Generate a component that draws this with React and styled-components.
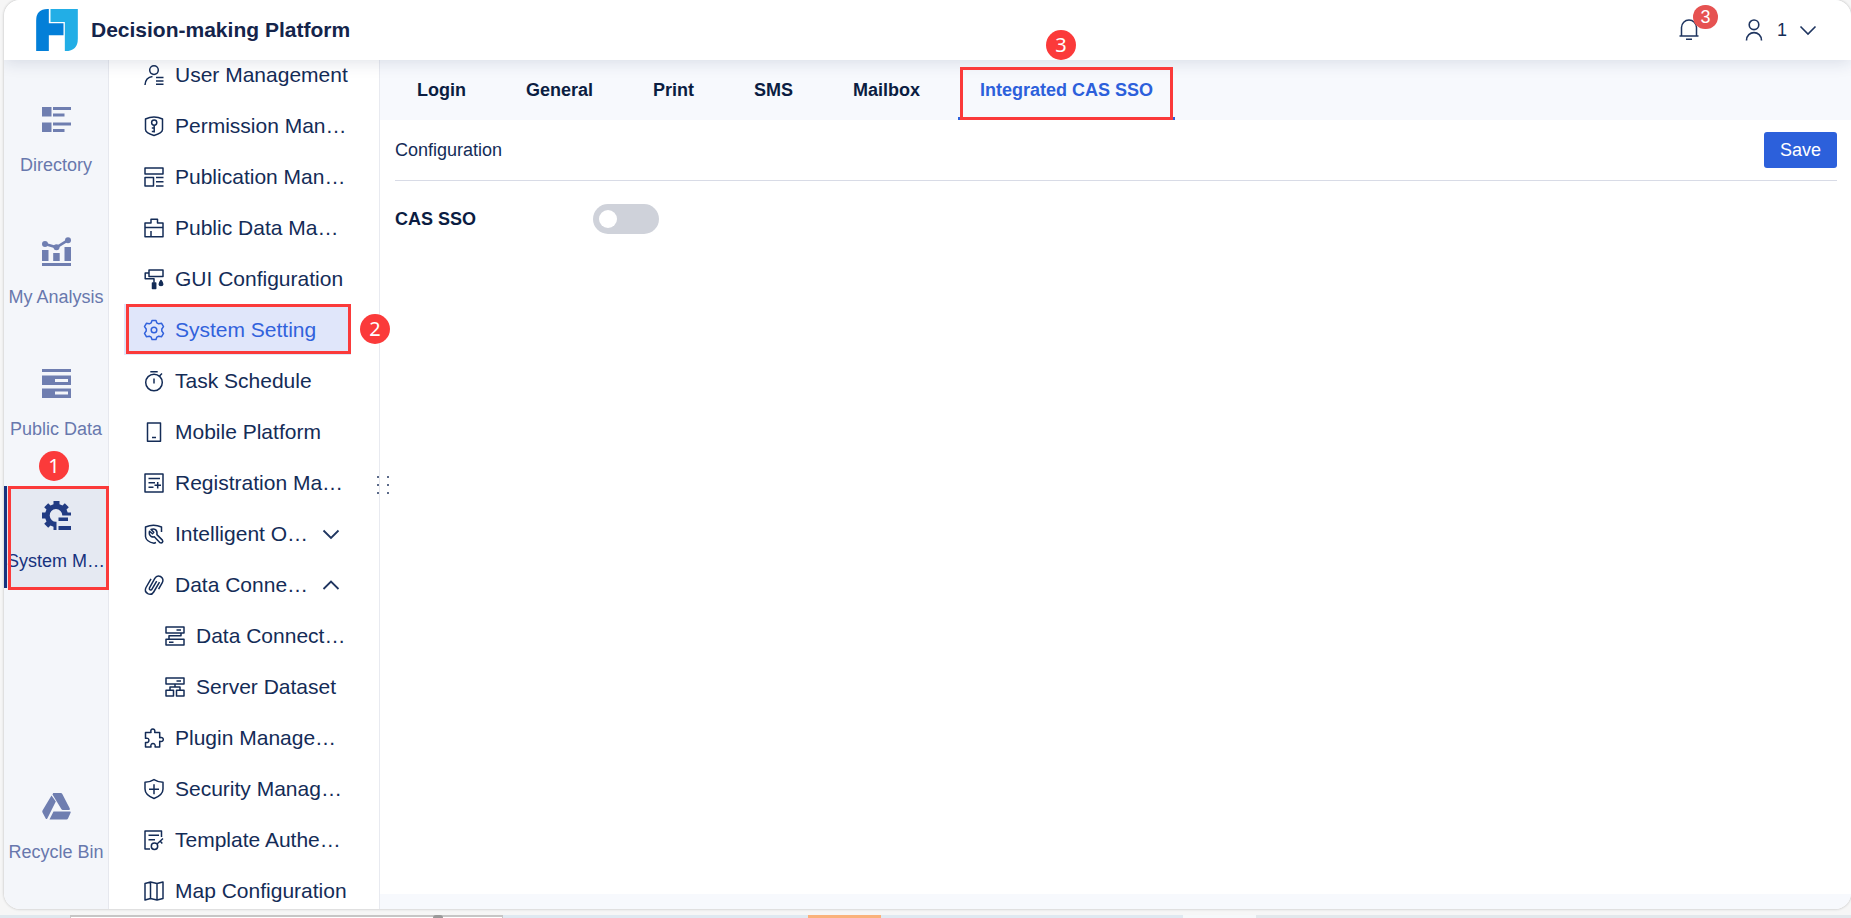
import { useState } from "react";
import styled, { createGlobalStyle } from "styled-components";

// Icons of the left rail (29px grid)
const railIcons = {
    directory: (
        <path d="M0 2h9.5v9.5H0zM11 2h18v3H11zM11 8.5h11.500v3H11zM0 17.5h9.5V27H0zM11 17.5h18v3H11zM11 24h11.500v3H11z" />
    ),
    analysis: (
        <>
            <path d="M0 13h6.500v11H0zM11.200 16h6.500v8h-6.500zM22.500 10H29v14h-6.500zM0 26h29v3H0z" />
            <path d="M3 7l11.500 3.300L26 3.200" fill="none" stroke="currentColor" strokeWidth="2.6" />
            <circle cx="3" cy="7" r="3" />
            <circle cx="14.5" cy="10.3" r="3" />
            <circle cx="26" cy="3.2" r="3" />
        </>
    ),
    data: (
        <path fillRule="evenodd" d="M0 0h29v3H0zM0 6.500h29V16H0zM13 10v3h13v-3zM0 19.500h29V29H0zM13 22.500v3h13v-3z" />
    ),
    system: (
        <>
            <path d="M11.500 0h6v3.200l3 1.300L22.800 2.200l4 4L24.500 8.500l1.200 3H29v3H20.300A6.300 6.300 0 1 0 14.500 20.700V29h-3v-3.300l-3-1.200-2.300 2.300-4-4 2.300-2.300-1.200-3H0v-6h3.300l1.200-3-2.300-2.300 4-4L8.500 4.500l3-1.300z" />
            <path d="M16.500 16.500H26V20h-9.500zM16.500 25H29v4H16.500z" />
        </>
    ),
    recycle: (
        <path d="M11.200 1h7.600q1 0 1.500 1l7.500 14.500q.5 1.500-1 1.500h-6q-1 0-1.500-1L10.500 2.500zM9.500 3.500l4.300 6-8.500 17q-1 1-1.600 0L.5 20.500q-.5-1 0-2zM11.500 19.500H28q1 0 .7 1l-2.700 6q-.5 1-1.500 1H7.500z" />
    ),
};

// Icons of the menu (20px grid, outlined)
const menuIcons = {
    user: <path d="M10 .8a4.300 4.300 0 1 1 0 8.600a4.300 4.300 0 1 1 0-8.600zM1 20c.3-5 3-8 7.500-8.500M12 12.500h7.500M12 16h7.500M12 19.300h7.500" />,
    permission: (
        <>
            <path d="M1.500 3Q10-1 18.500 3v10.500Q18.500 17 10 19.500 1.500 17 1.500 13.500z" />
            <circle cx="10.2" cy="6.600" r="2.600" />
            <path d="M10.200 9.200v7.300M10 12H7.800M10 15.500H7.800" />
        </>
    ),
    publication: <path d="M1 1h18v6H1zM1 10.500h8.500V19H1zM12 10.500h7.500M12 14.800h7.500M12 19h7.500" />,
    publicData: <path d="M1 5h6V1.200h6.500V5H19v13.800H1zM1 9.500h18M7 13v5.800" />,
    gui: (
        <>
            <path d="M5 1h14v6.500H5zM5 4H1.200v5.800H10v4" />
            <path d="M8.500 14h3.200v5.500H8.500zM17 11.500q3.500 5 0 5t0-5z" fill="currentColor" />
        </>
    ),
    setting: (
        <>
            <path d="M8 .5h4l.8 2.300 1.900 1 2.900-.5 1.900 3.300-1.700 2.400v2l1.700 2.400-1.900 3.300-2.900-.5-1.900 1-.8 2.300H8l-.8-2.300-1.900-1-2.900.5L.5 13.400 2.200 11V9L.5 6.600l1.900-3.300 2.900.5 1.900-1z" />
            <circle cx="10" cy="10" r="2.800" />
        </>
    ),
    task: (
        <>
            <circle cx="10" cy="11.500" r="8.300" />
            <path d="M6.300 .8h7.400M10 7.500v5M15.500 5L18 2.500" />
        </>
    ),
    mobile: <path d="M3.500 1h13v18.300h-13zM8 15.500h4" />,
    registration: <path d="M1 1h18v18H1zM4.500 5.500h11.500M4.500 9.700H11M4.500 14.200H9.500M10.500 12.200H17M13.700 9v6.500" />,
    intelligent: (
        <>
            <path d="M17.500 8V3Q9.500-.5 1.500 3v9.500Q2 17.500 10 19.300l2-.8" />
            <path d="M7 5.500l2.800 2.800-1.300 1.500L5.500 7.200Q4.600 11 7.300 12.500q1.600.8 3 .3l5.700 5.900q1.400.7 2.400-.3.900-1.100 0-2.300l-5.500-5.500Q13.500 7.200 11.500 5.600 9.400 4.300 7 5.500z" />
        </>
    ),
    clip: (
        <path d="M12.700 6.200L8 14.200c-1 1.700-3.400.4-2.500-1.400l5.300-9.400C12.300.8 14.500.5 16.500 1.500c2.600 1.400 3 4 1.800 6.200l-3.700 6.500M15.500 7.200L9.700 17c-1.200 2-3.600 2.800-5.900 1.600C1.300 17.200 .8 14.800 2 12.500L7 3.800" />
    ),
    connect: <path d="M1 1h18v6H1zM11.500 4h4.500M16 7v2.800H4V13.300M1 13.300h18V19H1zM4 16.200h4.500" />,
    dataset: <path d="M1 1h18v6H1zM11.500 4h4.500M10 7v3M5 13.300V10h10v3.300M1 13.300h7.500V19H1zM11.500 13.300H19V19h-7.500z" />,
    plugin: (
        <path d="M1.500 4.500H7C6.300 1.800 7.600 1 8.800 1s2.600.8 1.900 3.500h5v5.300c2.700-.7 3.600.5 3.600 1.700s-.9 2.400-3.600 1.700V19h-4.600c.6-2.500-.8-3.400-2.100-3.400S6.300 16.500 7 19H1.500v-4.600c2.500.5 3.400-.6 3.400-2.100S4 9.700 1.500 10.300z" />
    ),
    security: <path d="M10 .6Q14.500 3.300 19 3.300V10q0 6-9 9.500Q1 16 1 10V3.300q4.500 0 9-2.700zM10 5.200v10M5 10.200h10" />,
    template: (
        <>
            <path d="M17.500 7V1H1v18h5M4.500 5.300H15M4.500 9.800h6.500" />
            <circle cx="10.500" cy="16.300" r="3.200" />
            <path d="M13 14l6-5.500M16.500 11.500l1.800 2" />
        </>
    ),
    map: <path d="M1 2.500L6.500 1 13 2.500 19 1v16.500L13 19l-6.500-1.500L1 19zM6.500 1v16.500M13 2.500V19" />,
};

const railItems = [
    { id: "directory", label: "Directory" },
    { id: "analysis", label: "My Analysis" },
    { id: "data", label: "Public Data" },
    { id: "system", label: "System M…", step: 1 },
];

const menuItems = [
    { icon: "user", label: "User Management" },
    { icon: "permission", label: "Permission Man…" },
    { icon: "publication", label: "Publication Man…" },
    { icon: "publicData", label: "Public Data Ma…" },
    { icon: "gui", label: "GUI Configuration" },
    { icon: "setting", label: "System Setting", step: 2 },
    { icon: "task", label: "Task Schedule" },
    { icon: "mobile", label: "Mobile Platform" },
    { icon: "registration", label: "Registration Ma…" },
    { icon: "intelligent", label: "Intelligent O…", arrow: "down" },
    { icon: "clip", label: "Data Conne…", arrow: "up" },
    { icon: "connect", label: "Data Connect…", nested: true },
    { icon: "dataset", label: "Server Dataset", nested: true },
    { icon: "plugin", label: "Plugin Manage…" },
    { icon: "security", label: "Security Manag…" },
    { icon: "template", label: "Template Authe…" },
    { icon: "map", label: "Map Configuration" },
];

const tabs = ["Login", "General", "Print", "SMS", "Mailbox", "Integrated CAS SSO"];

function Chevron({ up }) {
    return (
        <ChevronSvg viewBox="0 0 18 18" aria-hidden="true">
            <path d={up ? "M1.500 13L9 5.500 16.500 13" : "M1.500 5.500L9 13l7.500-7.500"} />
        </ChevronSvg>
    );
}

function RailItem({ item }) {
    return (
        <RailLink href={`#${item.id}`} $active={Boolean(item.step)}>
            <RailSvg viewBox="0 0 29 29" aria-hidden="true">{railIcons[item.id]}</RailSvg>
            <span>{item.label}</span>
            {item.step && (
                <RailMark>
                    <RailStep>{item.step}</RailStep>
                </RailMark>
            )}
        </RailLink>
    );
}

export default function App() {
    const [tab, setTab] = useState("Integrated CAS SSO");
    const [enabled, setEnabled] = useState(false);

    return (
        <Page>
            <GlobalStyle />
            <Window>
                <Header>
                    <Logo viewBox="108 29 125 126" aria-hidden="true">
                        <path fill="#037fd8" d="M108 64Q108 29 142 29H146V72H190V108H146V155H108Z" />
                        <path fill="#22aee6" d="M151 29H233V118Q233 155 196 155H194V68H151Z" />
                    </Logo>
                    <Title>Decision-making Platform</Title>
                    <Bell type="button" aria-label="Notifications">
                        <svg width="20" height="22" viewBox="0 0 20 22" aria-hidden="true">
                            <path d="M2.500 17V8.500a7.500 7.500 0 0 1 15 0V17M.5 17h19M7 20.300h6" />
                        </svg>
                        <Count>3</Count>
                    </Bell>
                    <Account type="button">
                        <svg width="18" height="22" viewBox="0 0 18 22" aria-hidden="true">
                            <circle cx="9" cy="5.800" r="4.800" />
                            <path d="M1.500 21.500c0-10.500 15-10.500 15 0" />
                        </svg>
                        <span>1</span>
                        <Chevron />
                    </Account>
                </Header>

                <Body>
                    <Rail>
                        {railItems.map((item) => (
                            <RailItem key={item.id} item={item} />
                        ))}
                        <Spacer />
                        <RailItem item={{ id: "recycle", label: "Recycle Bin" }} />
                    </Rail>

                    <Menu>
                        <MenuList>
                            {menuItems.map((item) => (
                                <MenuButton
                                    type="button"
                                    key={item.label}
                                    $active={Boolean(item.step)}
                                    $nested={item.nested}
                                >
                                    <MenuSvg viewBox="0 0 20 20" aria-hidden="true">{menuIcons[item.icon]}</MenuSvg>
                                    <MenuLabel>{item.label}</MenuLabel>
                                    {item.arrow && <Chevron up={item.arrow === "up"} />}
                                    {item.step && (
                                        <MenuMark>
                                            <MenuStep>{item.step}</MenuStep>
                                        </MenuMark>
                                    )}
                                </MenuButton>
                            ))}
                        </MenuList>
                    </Menu>

                    <Content>
                        <Grip viewBox="0 0 12 18" aria-hidden="true">
                            <path d="M0 0h2v2H0zM10 0h2v2h-2zM0 8h2v2H0zM10 8h2v2h-2zM0 16h2v2H0zM10 16h2v2h-2z" />
                        </Grip>
                        <Tabs role="tablist">
                            {tabs.map((name) => (
                                <Tab
                                    type="button"
                                    role="tab"
                                    key={name}
                                    aria-selected={tab === name}
                                    $active={tab === name}
                                    onClick={() => setTab(name)}
                                >
                                    {name}
                                    {name === "Integrated CAS SSO" && (
                                        <TabMark>
                                            <TabStep>3</TabStep>
                                        </TabMark>
                                    )}
                                </Tab>
                            ))}
                        </Tabs>
                        <Panel>
                            <PanelHeader>
                                <PanelTitle>Configuration</PanelTitle>
                                <SaveButton type="button">Save</SaveButton>
                            </PanelHeader>
                            <Field>
                                <FieldLabel htmlFor="cas-sso">CAS SSO</FieldLabel>
                                <Switch
                                    id="cas-sso"
                                    type="checkbox"
                                    checked={enabled}
                                    onChange={(e) => setEnabled(e.target.checked)}
                                />
                            </Field>
                        </Panel>
                    </Content>
                </Body>
            </Window>
            <Backdrop>
                <Slice $grow={70} $color="#dfe8ee" />
                <Box>
                    <Knob />
                </Box>
                <Slice $grow={305} $color="#dfe9f1" />
                <Slice $grow={73} $color="#fab27b" />
                <Slice $grow={302} $color="#dfe9f1" />
                <Slice $grow={73} $color="#f5f8fa" />
                <Slice $grow={596} $color="#e2e8ec" />
            </Backdrop>
        </Page>
    );
}

const GlobalStyle = createGlobalStyle`
    * {
        box-sizing: border-box;
    }

    body {
        margin: 0;
        background: #f6f6f6;
        color: #142c57;
        font-family: "Liberation Sans", Arial, sans-serif;
        font-size: 18px;
    }

    button {
        border: none;
        background: none;
        padding: 0;
        color: inherit;
        font: inherit;
        cursor: pointer;
    }
`;

const Page = styled.div`
    height: 100vh;
    display: flex;
    flex-direction: column;
    overflow: hidden;
`;

const Window = styled.div`
    flex: 1;
    min-height: 0;
    margin-left: 4px;
    margin-bottom: 6px;
    display: flex;
    flex-direction: column;
    overflow: hidden;
    border-radius: 16px;
    background: white;
    box-shadow: 0 0 2px 1px #d8d8d8;
`;

const Header = styled.header`
    position: relative;
    z-index: 1;
    flex: none;
    height: 60px;
    padding: 0 34px 0 32px;
    display: flex;
    align-items: center;
    background: white;
    box-shadow: 0 2px 16px rgba(20, 44, 87, 0.14);
`;

const Logo = styled.svg`
    width: 42px;
    height: 42px;
`;

const Title = styled.h1`
    margin: 0 auto 0 13px;
    color: #14244b;
    font-size: 21px;
    line-height: 24px;
`;

const Bell = styled.button`
    position: relative;
    display: flex;
    margin-right: 46px;

    svg {
        fill: none;
        stroke: #1f3560;
        stroke-width: 1.5;
    }
`;

const Count = styled.span`
    position: absolute;
    left: 14px;
    top: -14px;
    width: 25px;
    height: 24px;
    border-radius: 12px;
    background: #e65251;
    color: white;
    line-height: 24px;
    text-align: center;
`;

const Account = styled.button`
    display: flex;
    align-items: center;

    span {
        margin: 0 12px 0 14px;
    }

    svg {
        fill: none;
        stroke: #1f3560;
        stroke-width: 1.6;
    }
`;

const ChevronSvg = styled.svg`
    flex: none;
    width: 18px;
    height: 18px;
    fill: none;
    stroke: #1f3560;
    stroke-width: 1.8;
`;

const Body = styled.div`
    flex: 1;
    min-height: 0;
    display: flex;
`;

const Rail = styled.nav`
    flex: none;
    width: 105px;
    padding: 30px 0;
    display: flex;
    flex-direction: column;
    gap: 30px;
    border-right: 1px solid #e6e8ee;
    background: #f4f6fa;
`;

const RailLink = styled.a`
    position: relative;
    height: 102px;
    padding-top: 15px;
    display: flex;
    flex-direction: column;
    align-items: center;
    gap: 21px;
    background: ${({ $active }) => ($active ? "#e5e9f2" : "transparent")};
    box-shadow: ${({ $active }) => ($active ? "inset 3px 0 #17327e" : "none")};
    color: ${({ $active }) => ($active ? "#17327e" : "#6878ad")};
    line-height: 20px;
    text-decoration: none;
    white-space: nowrap;
`;

const RailSvg = styled.svg`
    flex: none;
    width: 29px;
    height: 29px;
    fill: currentColor;
    opacity: 0.95;
`;

const Spacer = styled.div`
    flex: 1;
    margin-bottom: -30px;
`;

// Red frames and numbered circles drawn over the steps
const Mark = styled.span`
    position: absolute;
    z-index: 2;
    border: 3px solid #fb3a3a;
    pointer-events: none;
`;

const Step = styled.span`
    position: absolute;
    width: 30px;
    height: 30px;
    border-radius: 50%;
    background: #fb3a3a;
    color: white;
    font-family: "Noto Sans", sans-serif;
    font-size: 20px;
    font-weight: 400;
    line-height: 30px;
    text-align: center;
`;

const RailMark = styled(Mark)`
    inset: 0 -1px -2px 4px;
`;

const RailStep = styled(Step)`
    left: 28px;
    top: -38px;
`;

const MenuMark = styled(Mark)`
    inset: 0 0 1px 2px;
`;

const MenuStep = styled(Step)`
    left: 231px;
    top: 7px;
`;

const TabMark = styled(Mark)`
    inset: 4px 2px -3px;
`;

const TabStep = styled(Step)`
    left: 83px;
    top: -40px;
`;

const Menu = styled.nav`
    flex: none;
    width: 271px;
    padding: 0 28px 0 15px;
    border-right: 1px solid #e8eaf0;
    background: white;
`;

// The list is scrolled a little under the header
const MenuList = styled.div`
    margin-top: -11px;
    display: flex;
    flex-direction: column;
`;

const MenuButton = styled.button`
    position: relative;
    height: 51px;
    padding: 0 11px 0 ${({ $nested }) => ($nested ? "41px" : "20px")};
    display: flex;
    align-items: center;
    gap: 11px;
    background: ${({ $active }) => ($active ? "#e0e6fa" : "transparent")};
    color: ${({ $active }) => ($active ? "#3162dc" : "#142c57")};
    font-size: 21px;
    text-align: left;
    white-space: nowrap;
`;

const MenuSvg = styled.svg`
    flex: none;
    width: 20px;
    height: 20px;
    overflow: visible;
    fill: none;
    stroke: currentColor;
    stroke-width: 1.5;
    stroke-linejoin: round;
`;

const MenuLabel = styled.span`
    flex: 1;
`;

const Content = styled.main`
    position: relative;
    flex: 1;
    min-width: 0;
    padding-bottom: 15px;
    display: flex;
    flex-direction: column;
    background: #f7f9fd;
`;

const Grip = styled.svg`
    position: absolute;
    left: -3px;
    top: 50%;
    width: 12px;
    height: 18px;
    margin-top: -9px;
    fill: #5c6b8a;
`;

const Tabs = styled.div`
    flex: none;
    height: 60px;
    padding-left: 15px;
    display: flex;
    gap: 16px;
`;

const Tab = styled.button`
    position: relative;
    padding: 0 22px;
    border-top: 3px solid transparent;
    border-bottom: 3px solid ${({ $active }) => ($active ? "#2c60db" : "transparent")};
    color: ${({ $active }) => ($active ? "#2c60db" : "#0b1d42")};
    font-weight: 700;
`;

const Panel = styled.section`
    flex: 1;
    padding: 0 14px 0 15px;
    background: white;
`;

const PanelHeader = styled.div`
    height: 61px;
    display: flex;
    align-items: center;
    justify-content: space-between;
    border-bottom: 1px solid #d8dbe6;
`;

const PanelTitle = styled.h2`
    margin: 0;
    font-size: 18px;
    font-weight: 400;
`;

const SaveButton = styled.button`
    height: 36px;
    padding: 0 16px;
    border-radius: 3px;
    background: #2c60db;
    color: white;
`;

const Field = styled.div`
    margin-top: 23px;
    display: flex;
    align-items: center;
`;

const FieldLabel = styled.label`
    width: 198px;
    color: #0b1d42;
    font-weight: 700;
`;

const Switch = styled.input`
    appearance: none;
    width: 66px;
    height: 30px;
    margin: 0;
    padding: 6px;
    display: flex;
    justify-content: flex-start;
    border-radius: 15px;
    background: #cfd2da;
    cursor: pointer;

    &::before {
        content: "";
        width: 18px;
        height: 18px;
        border-radius: 50%;
        background: white;
    }

    &:checked {
        justify-content: flex-end;
        background: #2c60db;
    }
`;

const Backdrop = styled.div`
    flex: none;
    height: 3px;
    display: flex;
`;

const Slice = styled.div`
    flex: ${({ $grow }) => $grow} 1 0;
    background: ${({ $color }) => $color};
`;

const Box = styled.div`
    flex: 432 1 0;
    display: flex;
    justify-content: flex-end;
    border: 1px solid #c6c6c6;
    border-top-width: 2px;
    border-bottom: none;
    background: white;
`;

const Knob = styled.div`
    width: 10px;
    height: 3px;
    margin: -2px 59px 0 0;
    border-radius: 5px 5px 0 0;
    background: #9a9a9a;
`;
